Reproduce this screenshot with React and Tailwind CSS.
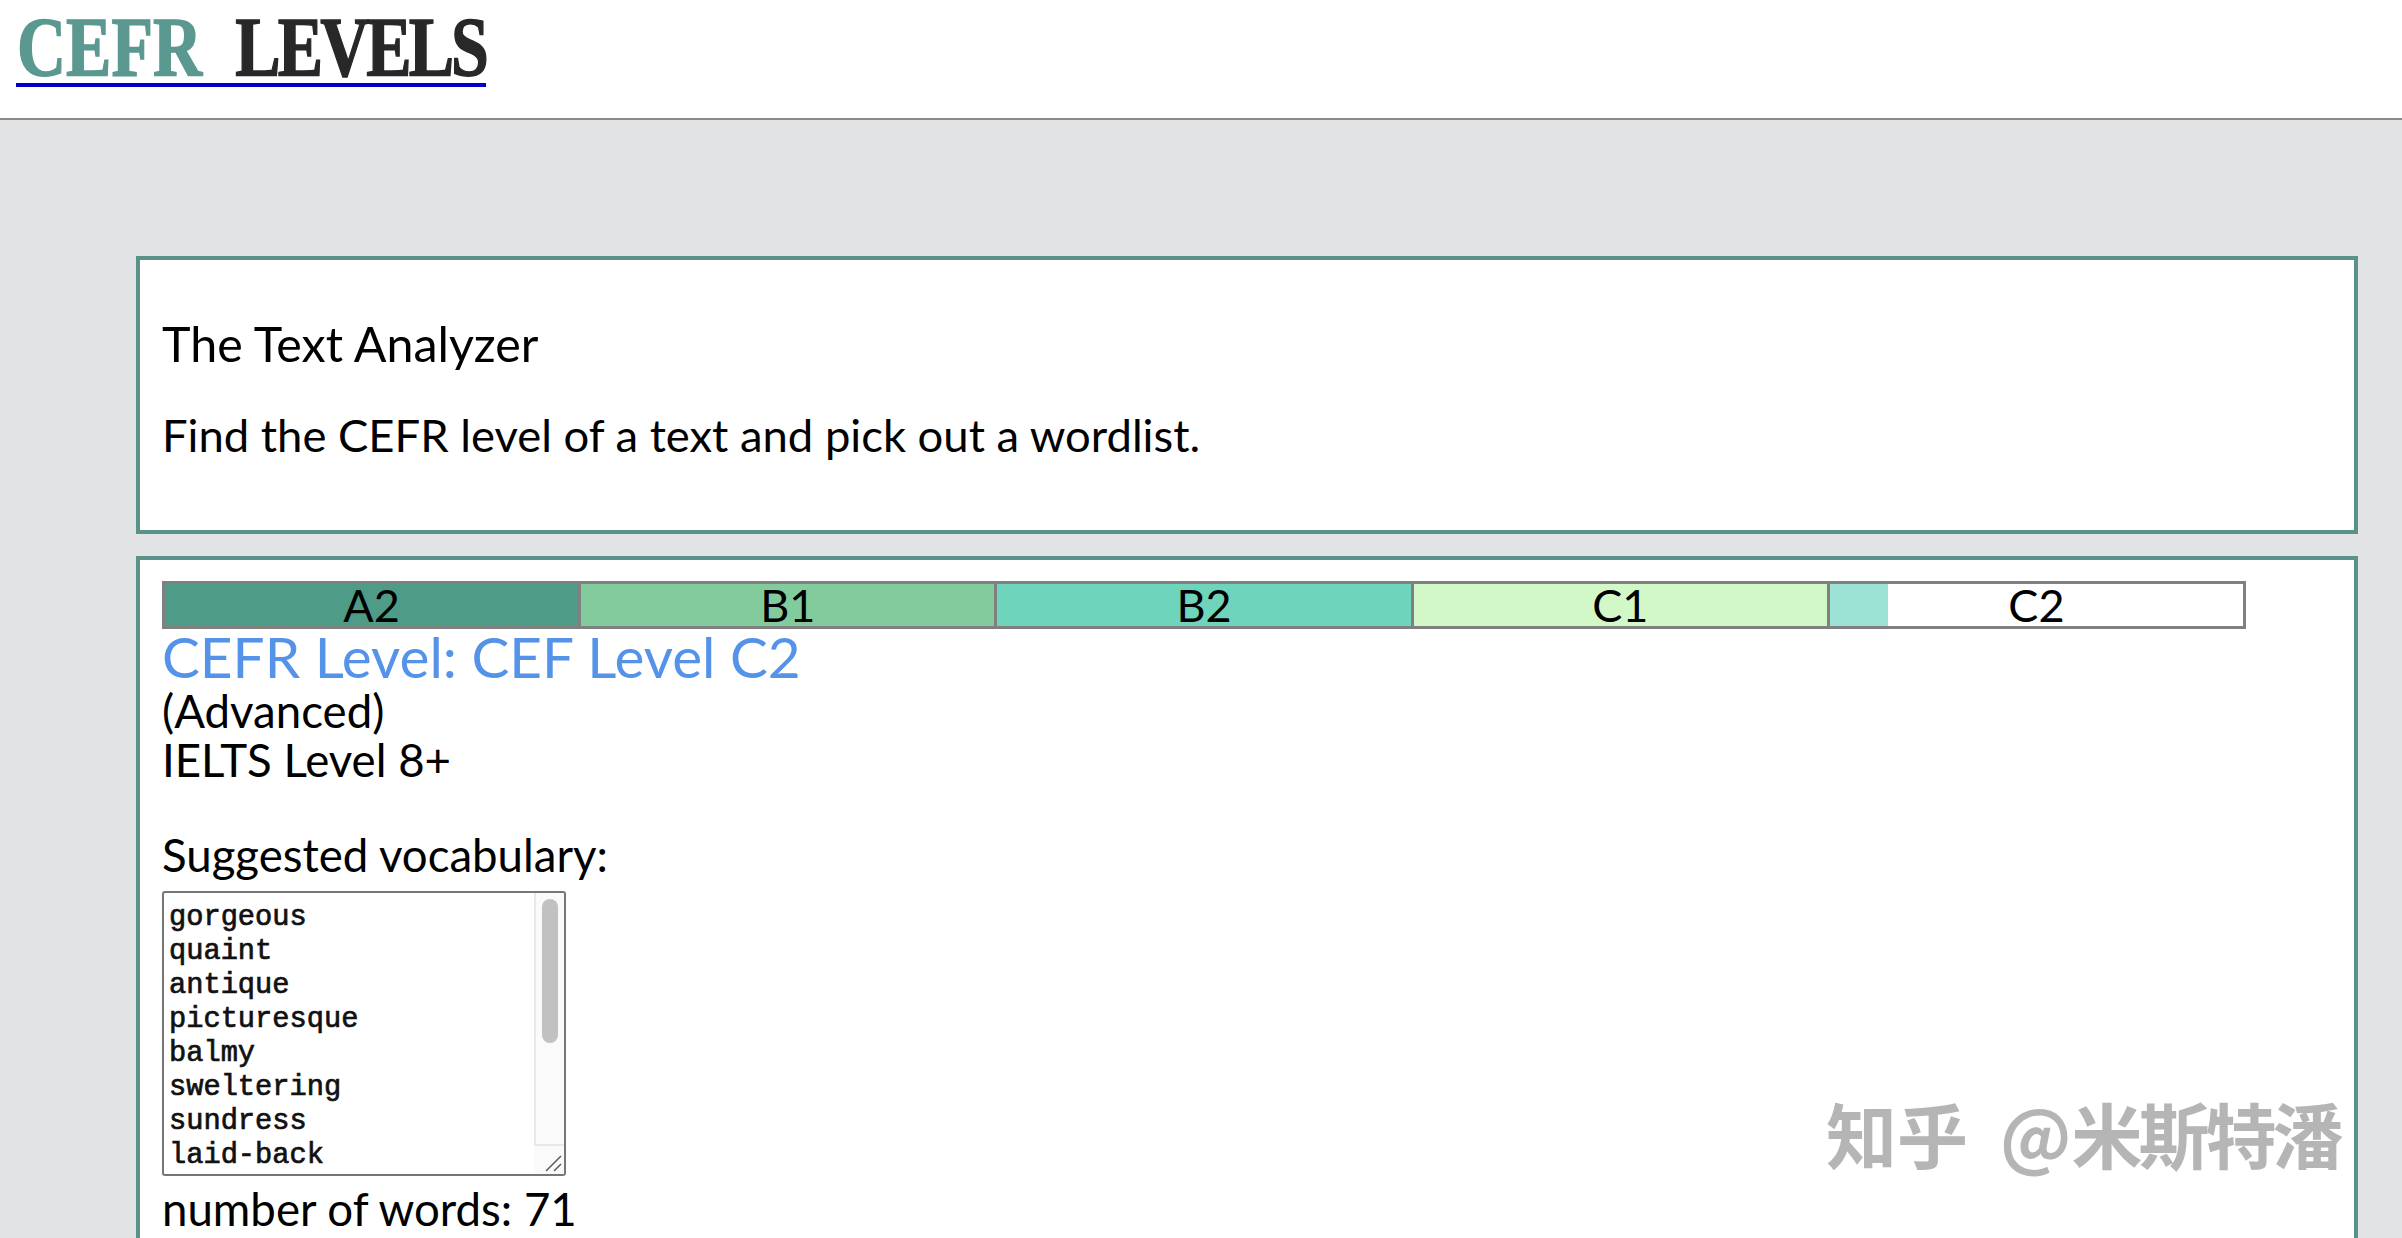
const words = ['gorgeous', 'quaint', 'antique', 'picturesque', 'balmy', 'sweltering', 'sundress', 'laid-back'];

const levels = [
  { name: 'A2', bg: 'bg-[#4e9c87]' },
  { name: 'B1', bg: 'bg-[#82cb9d]' },
  { name: 'B2', bg: 'bg-[#6fd4bc]' },
  { name: 'C1', bg: 'bg-[#d2f8c8]' },
];

function LevelBar() {
  return (
    <div className="flex w-[2084px] h-[48px] text-[45px] leading-[48px] text-black">
      {levels.map((l, i) => (
        <div key={l.name} className={`flex-1 text-center border-[3px] border-[#808080] ${i > 0 ? 'border-l-0' : ''} ${l.bg}`}>
          <span className="block -mt-[3px]">{l.name}</span>
        </div>
      ))}
      <div className="relative flex-1 text-center border-[3px] border-l-0 border-[#808080] bg-white">
        <div className="absolute left-0 top-0 bottom-0 w-[58px] bg-[#9ce2d5]" />
        <span className="relative block -mt-[3px]">C2</span>
      </div>
    </div>
  );
}

function WordBox() {
  return (
    <div className="relative mt-[12px] w-[404px] h-[285px]">
      <textarea
        readOnly
        value={words.join('\n')}
        className="block w-full h-full bg-white border-2 border-[#767676] rounded-[3px] pl-[5px] pt-[8px] font-['Liberation_Mono',monospace] text-[28.7px] leading-[34px] text-[#111] [-webkit-text-stroke:0.7px_#111] resize-none overflow-hidden outline-none"
      />
      {/* the browser hides real scrollbars in the photo, so these are drawn */}
      <div className="absolute top-[2px] right-[2px] bottom-[32px] w-[30px] bg-[#fafafa] border-l-2 border-[#e8e8e8]">
        <div className="ml-[6px] mt-[6px] w-[16px] h-[144px] rounded-full bg-[#c1c1c1]" />
      </div>
      <div className="absolute right-[2px] bottom-[2px] w-[30px] h-[30px] bg-[#fafafa] border-t-2 border-[#e8e8e8]">
        <svg viewBox="0 0 30 28" className="w-[30px] h-[28px]" stroke="#555" strokeWidth="1.5">
          <line x1="12" y1="25" x2="27" y2="10" />
          <line x1="20" y1="25" x2="27" y2="18" />
        </svg>
      </div>
    </div>
  );
}

export default function App() {
  return (
    <div className="relative h-[1238px] overflow-hidden bg-[#e1e3e5] font-['Lato','Noto_Sans',sans-serif] text-black">
      <header className="h-[120px] bg-white border-b-2 border-[#8a8a8a] pl-[17px] pt-[4px]">
        <a href="#" className="block w-[470px] -ml-px pl-px h-[83px] border-b-[4px] border-[#0000c8]">
          <span className="block origin-left scale-x-[0.8] font-['Liberation_Serif',serif] font-bold text-[85px] leading-[87px] whitespace-pre [-webkit-text-stroke:1.5px]">
            <span className="text-[#5a9890] mr-[24px]">CEFR</span>
            <span className="text-[#282828] tracking-[-3.7px]"> LEVELS</span>
          </span>
        </a>
      </header>

      <main className="pt-[136px] pl-[136px] pr-[44px]">
        <section className="h-[278px] bg-white border-4 border-[#5a9188] pl-[22px] pt-[53px]">
          <h1 className="text-[48.4px] leading-[60px] font-normal">The Text Analyzer</h1>
          <p className="mt-[32px] text-[45.4px] leading-[60px]">Find the CEFR level of a text and pick out a wordlist.</p>
        </section>

        <section className="mt-[22px] h-[800px] bg-white border-4 border-[#5a9188] pl-[22px] pt-[21px]">
          <LevelBar />
          <div className="text-[56.7px] leading-[55px] text-[#5593e8]">CEFR Level: CEF Level C2</div>
          <div className="text-[45.6px] leading-[49px] mt-[2px]">(Advanced)</div>
          <div className="text-[45.6px] leading-[49px]">IELTS Level 8+</div>
          <div className="text-[45.6px] leading-[49px] mt-[46px]">Suggested vocabulary:</div>
          <WordBox />
          <div className="text-[45.6px] leading-[49px] mt-[8px]">number of words: 71</div>
        </section>
      </main>

      <div className="absolute left-[1826px] top-[1088px] font-['Noto_Sans_CJK_SC',sans-serif] font-bold text-[71px] leading-[88px] text-[#b5b5b5] whitespace-pre">
        <span className="mr-[32px]">知乎</span>
        <span>@</span>
        <span className="tracking-[-4px]">米斯特潘</span>
      </div>
    </div>
  );
}
